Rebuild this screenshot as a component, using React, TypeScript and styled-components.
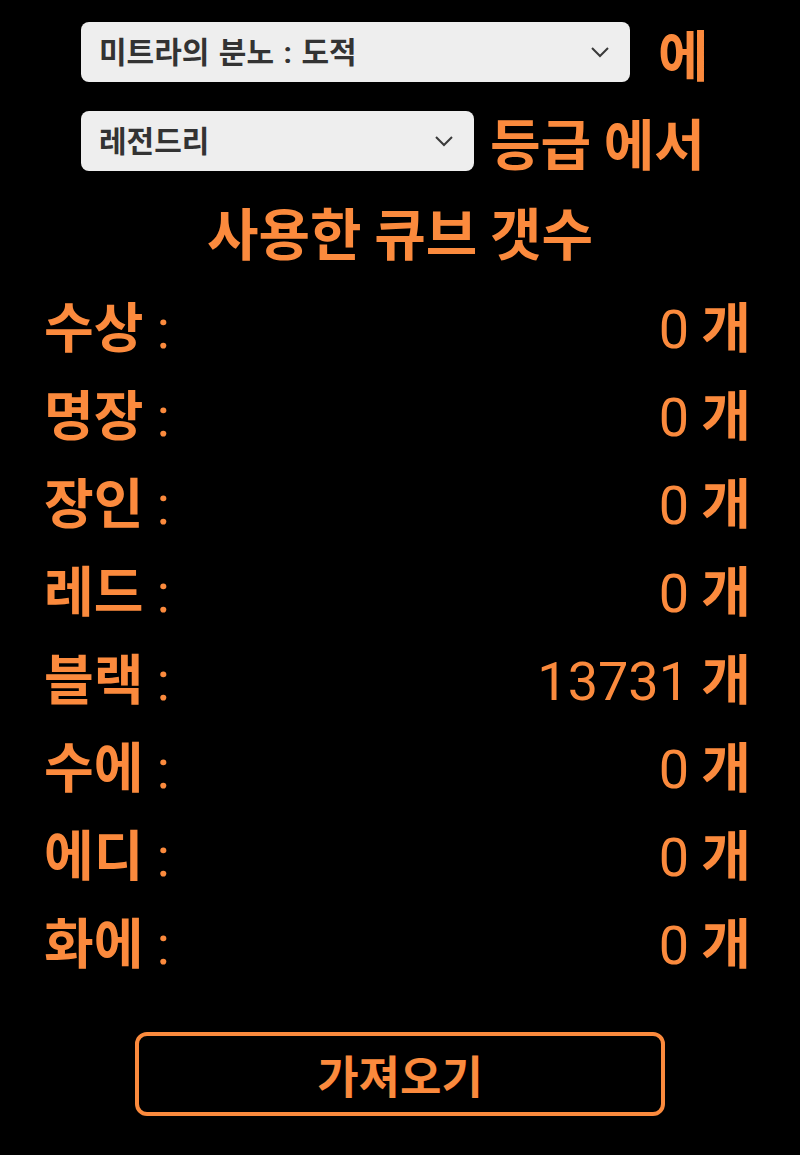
import React, { useState } from 'react';
import styled, { createGlobalStyle } from 'styled-components';

const ORANGE = '#fb8a3d';

const GlobalStyle = createGlobalStyle`
  html, body {
    margin: 0;
    padding: 0;
    background: #000000;
  }
  body {
    font-family: Roboto, "Noto Sans CJK KR", sans-serif;
  }
`;

const SERIES = ['미트라의 분노 : 도적', '미트라의 분노 : 전사', '미트라의 분노 : 마법사'];
const GRADES = ['레어', '에픽', '유니크', '레전드리'];

const CUBES = [
  { name: '수상', count: 0 },
  { name: '명장', count: 0 },
  { name: '장인', count: 0 },
  { name: '레드', count: 0 },
  { name: '블랙', count: 13731 },
  { name: '수에', count: 0 },
  { name: '에디', count: 0 },
  { name: '화에', count: 0 },
];

function Chevron() {
  return (
    <ChevronIcon width="20" height="12" viewBox="0 0 20 12">
      <path d="M2 2 L10 10 L18 2" fill="none" stroke="#3a3a3a" strokeWidth="2" />
    </ChevronIcon>
  );
}

function App() {
  const [series, setSeries] = useState(SERIES[0]);
  const [grade, setGrade] = useState('레전드리');

  return (
    <Page>
      <GlobalStyle />
      <SelectRow>
        <SelectBox $width={549}>
          <Select value={series} onChange={(e) => setSeries(e.target.value)}>
            {SERIES.map((s) => (
              <option key={s}>{s}</option>
            ))}
          </Select>
          <Chevron />
        </SelectBox>
        <Suffix $gap={28}>에</Suffix>
      </SelectRow>
      <SelectRow>
        <SelectBox $width={393}>
          <Select value={grade} onChange={(e) => setGrade(e.target.value)}>
            {GRADES.map((g) => (
              <option key={g}>{g}</option>
            ))}
          </Select>
          <Chevron />
        </SelectBox>
        <Suffix $gap={16}>등급 에서</Suffix>
      </SelectRow>
      <Title>사용한 큐브 갯수</Title>
      <StatList>
        {CUBES.map((c) => (
          <StatRow key={c.name}>
            <Label>
              {c.name}
              <Colon> :</Colon>
            </Label>
            <Value>
              <Count>{c.count}</Count>
              <Unit> 개</Unit>
            </Value>
          </StatRow>
        ))}
      </StatList>
      <Footer>
        <FetchButton>가져오기</FetchButton>
      </Footer>
    </Page>
  );
}

const Page = styled.div`
  width: 800px;
  height: 1155px;
  padding-top: 22px;
  box-sizing: border-box;
  background: #000000;
  color: ${ORANGE};
  overflow: hidden;
`;

const SelectRow = styled.div`
  display: flex;
  align-items: center;
  padding-left: 81px;
  height: 60px;
  margin-bottom: 29px;
`;

const SelectBox = styled.div<{ $width: number }>`
  position: relative;
  flex: none;
  width: ${(p) => p.$width}px;
  height: 60px;
`;

const Select = styled.select`
  appearance: none;
  width: 100%;
  height: 100%;
  border: none;
  border-radius: 8px;
  background: #eeeeee;
  padding: 0 50px 0 18px;
  font-family: Roboto, "Noto Sans CJK KR", sans-serif;
  font-size: 30px;
  font-weight: 700;
  word-spacing: 2px;
  color: #333333;
  outline: none;
`;

const ChevronIcon = styled.svg`
  position: absolute;
  right: 20px;
  top: 24px;
  pointer-events: none;
`;

const Suffix = styled.span<{ $gap: number }>`
  margin-left: ${(p) => p.$gap}px;
  font-family: "Noto Sans CJK KR", sans-serif;
  font-size: 55px;
  font-weight: 700;
  line-height: 60px;
  white-space: nowrap;
`;

const Title = styled.h1`
  margin: 0;
  height: 70px;
  text-align: center;
  font-family: "Noto Sans CJK KR", sans-serif;
  font-size: 56px;
  font-weight: 700;
  line-height: 62px;
`;

const StatList = styled.div`
  margin-top: 13px;
  padding: 0 49px 0 44px;
`;

const StatRow = styled.div`
  display: flex;
  align-items: center;
  justify-content: space-between;
  height: 88px;
  line-height: 88px;
`;

const Label = styled.div`
  font-family: "Noto Sans CJK KR", sans-serif;
  font-size: 54px;
  font-weight: 700;
  white-space: pre;
`;

const Colon = styled.span`
  font-family: Roboto, sans-serif;
  font-weight: 400;
`;

const Value = styled.div`
  white-space: pre;
  font-size: 54px;
`;

const Count = styled.span`
  font-family: Roboto, sans-serif;
  font-weight: 400;
`;

const Unit = styled.span`
  font-family: "Noto Sans CJK KR", sans-serif;
  font-weight: 700;
`;

const Footer = styled.div`
  display: flex;
  justify-content: center;
  margin-top: 45px;
`;

const FetchButton = styled.button`
  width: 530px;
  height: 84px;
  background: #000000;
  border: 4px solid ${ORANGE};
  border-radius: 12px;
  color: ${ORANGE};
  font-family: "Noto Sans CJK KR", sans-serif;
  font-size: 45px;
  font-weight: 700;
  cursor: pointer;
`;

export default App;
